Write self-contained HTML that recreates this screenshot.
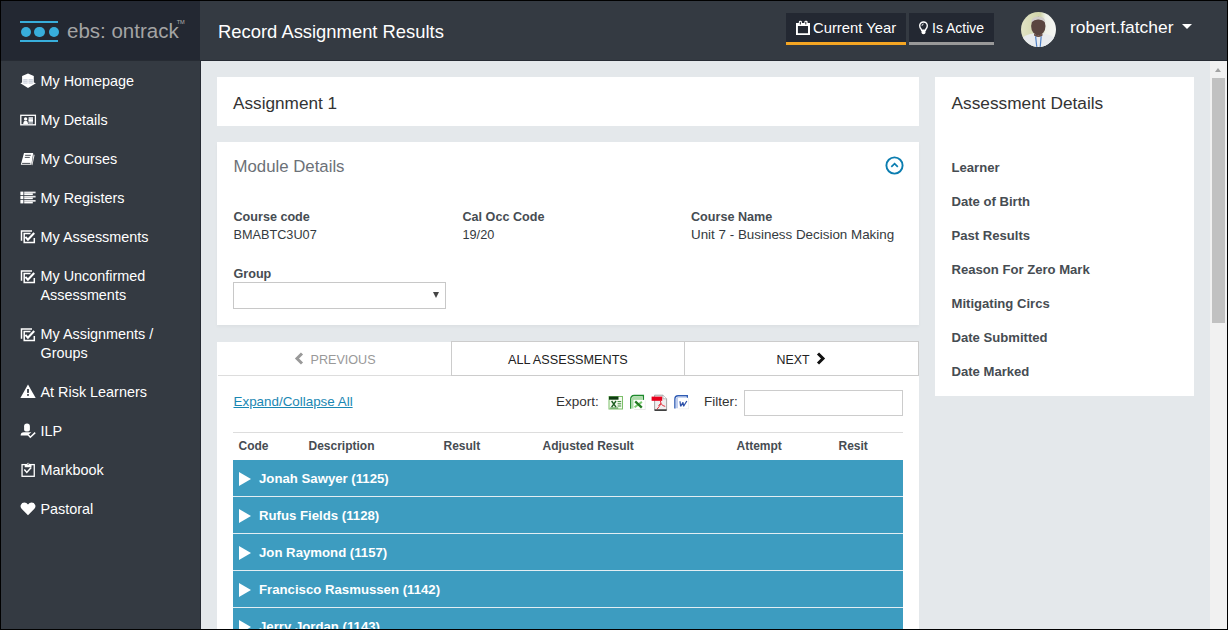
<!DOCTYPE html>
<html><head><meta charset="utf-8">
<style>
*{box-sizing:border-box;margin:0;padding:0}
html,body{width:1228px;height:630px;overflow:hidden;background:#000;font-family:"Liberation Sans",sans-serif}
#frame{position:absolute;left:0;top:0;width:1228px;height:630px;overflow:hidden;background:#000}
.a{position:absolute}
.t{position:absolute;white-space:nowrap}
svg{position:absolute;overflow:visible}
</style></head><body><div id="frame">
<div class="a" style="left:1px;top:1px;width:1226px;height:628px;background:#e4e8eb;"></div>
<div class="a" style="left:1px;top:1px;width:199px;height:59px;background:#232832;"></div>
<div class="a" style="left:200px;top:1px;width:1027px;height:59px;background:#343a42;"></div>
<div class="a" style="left:1px;top:60px;width:1226px;height:1px;background:#262b33;"></div>
<div class="a" style="left:1px;top:61px;width:199px;height:568px;background:#343a42;"></div>
<div class="a" style="left:200px;top:61px;width:1px;height:568px;background:#262b33;"></div>
<div class="a" style="left:20px;top:21px;width:38px;height:2px;background:#38aedb;"></div>
<div class="a" style="left:20px;top:40px;width:38px;height:2px;background:#38aedb;"></div>
<div class="a" style="left:20.5px;top:26.6px;width:10.4px;height:10.4px;border-radius:50%;background:#38aedb"></div>
<div class="a" style="left:34.4px;top:26.6px;width:10.4px;height:10.4px;border-radius:50%;background:#38aedb"></div>
<div class="a" style="left:48.599999999999994px;top:26.6px;width:10.4px;height:10.4px;border-radius:50%;background:#38aedb"></div>
<div class="a" style="left:786px;top:13px;width:120px;height:29px;background:#232832;"></div>
<div class="a" style="left:786px;top:42px;width:120px;height:3px;background:#f5a623;"></div>
<div class="a" style="left:909px;top:13px;width:85px;height:29px;background:#232832;"></div>
<div class="a" style="left:909px;top:42px;width:85px;height:3px;background:#999999;"></div>
<svg style="left:1021px;top:12px" width="35" height="35" viewBox="0 0 35 35"><defs><clipPath id="av"><circle cx="17.5" cy="17.5" r="17.5"/></clipPath><linearGradient id="avbg" x1="0" x2="1" y1="0" y2="0"><stop offset="0" stop-color="#e2e4c6"/><stop offset="0.55" stop-color="#cfd3a8"/><stop offset="0.7" stop-color="#eef0e8"/><stop offset="1" stop-color="#f6f7f4"/></linearGradient></defs><g clip-path="url(#av)"><rect width="35" height="35" fill="url(#avbg)"/><path d="M-2 36 L0 27 Q4 22.5 12 21.5 L23 21.5 Q31 23 36 28 L37 36Z" fill="#e8ebee"/><ellipse cx="17.3" cy="14" rx="7.2" ry="9.2" fill="#5a4540"/><path d="M10.2 10.4 Q10.4 4.6 17.3 4.4 Q24.2 4.6 24.4 10.4 Q21 7.4 17.3 7.6 Q13.6 7.4 10.2 10.4Z" fill="#cfcbc9"/><path d="M13.2 21.5 Q17.3 24.8 21.4 21.5 L21.6 23.4 Q17.3 26.4 13 23.4Z" fill="#6a4f47"/><path d="M14.6 24.4 L15.8 35 M20.2 24.2 L19.2 35" stroke="#4f80c6" stroke-width="1.2"/></g></svg>
<div class="a" style="left:1182px;top:24px;width:0;height:0;border-left:5px solid transparent;border-right:5px solid transparent;border-top:5px solid #fff"></div>
<div class="a" style="left:217px;top:77px;width:702px;height:49px;background:#fff;"></div>
<div class="a" style="left:217px;top:142px;width:702px;height:183px;background:#fff;box-shadow:0 2px 3px rgba(0,0,0,0.035)"></div>
<div class="a" style="left:233px;top:282px;width:213px;height:27px;background:#fff;border:1px solid #c8c8c8"></div>
<div class="a" style="left:433px;top:292px;width:0;height:0;border-left:3px solid transparent;border-right:3px solid transparent;border-top:6px solid #444"></div>
<svg style="left:884.7px;top:156.3px" width="19" height="19" viewBox="0 0 19 19"><circle cx="9.5" cy="9.5" r="8.1" fill="none" stroke="#0b7db0" stroke-width="1.9"/><path d="M6.3 10.9 L9.6 7.6 L12.8 10.9" fill="none" stroke="#0b7db0" stroke-width="1.7"/></svg>
<div class="a" style="left:217px;top:342px;width:702px;height:290px;background:#fff;"></div>
<div class="a" style="left:218px;top:375px;width:233px;height:1px;background:#dddddd;"></div>
<div class="a" style="left:451px;top:341px;width:234px;height:35px;background:#fff;border:1px solid #cccccc"></div>
<div class="a" style="left:684px;top:341px;width:235px;height:35px;background:#fff;border:1px solid #cccccc"></div>
<svg style="left:294px;top:352px" width="11" height="13" viewBox="0 0 11 13"><path d="M8 1.5 L3 6.5 L8 11.5" fill="none" stroke="#999" stroke-width="3"/></svg>
<svg style="left:815px;top:352px" width="11" height="13" viewBox="0 0 11 13"><path d="M3 1.5 L8 6.5 L3 11.5" fill="none" stroke="#111" stroke-width="3"/></svg>
<div class="a" style="left:744px;top:390px;width:159px;height:26px;background:#fff;border:1px solid #cccccc"></div>
<div class="a" style="left:233px;top:432px;width:670px;height:1px;background:#dddddd;"></div>
<div class="a" style="left:233px;top:460px;width:670px;height:36px;background:#3d9cc0;"></div>
<div class="a" style="left:233px;top:496px;width:670px;height:1px;background:#e3eef3;"></div>
<div class="a" style="left:238.5px;top:471.6px;width:0;height:0;border-top:7px solid transparent;border-bottom:7px solid transparent;border-left:12.2px solid #fff"></div>
<div class="a" style="left:233px;top:497px;width:670px;height:36px;background:#3d9cc0;"></div>
<div class="a" style="left:233px;top:533px;width:670px;height:1px;background:#e3eef3;"></div>
<div class="a" style="left:238.5px;top:508.6px;width:0;height:0;border-top:7px solid transparent;border-bottom:7px solid transparent;border-left:12.2px solid #fff"></div>
<div class="a" style="left:233px;top:534px;width:670px;height:36px;background:#3d9cc0;"></div>
<div class="a" style="left:233px;top:570px;width:670px;height:1px;background:#e3eef3;"></div>
<div class="a" style="left:238.5px;top:545.6px;width:0;height:0;border-top:7px solid transparent;border-bottom:7px solid transparent;border-left:12.2px solid #fff"></div>
<div class="a" style="left:233px;top:571px;width:670px;height:36px;background:#3d9cc0;"></div>
<div class="a" style="left:233px;top:607px;width:670px;height:1px;background:#e3eef3;"></div>
<div class="a" style="left:238.5px;top:582.6px;width:0;height:0;border-top:7px solid transparent;border-bottom:7px solid transparent;border-left:12.2px solid #fff"></div>
<div class="a" style="left:233px;top:608px;width:670px;height:36px;background:#3d9cc0;"></div>
<div class="a" style="left:233px;top:644px;width:670px;height:1px;background:#e3eef3;"></div>
<div class="a" style="left:238.5px;top:619.6px;width:0;height:0;border-top:7px solid transparent;border-bottom:7px solid transparent;border-left:12.2px solid #fff"></div>
<div class="a" style="left:935px;top:77px;width:259px;height:319px;background:#fff;"></div>
<div class="a" style="left:1210px;top:61px;width:17px;height:568px;background:#f1f1f1;"></div>
<div class="a" style="left:1212px;top:78px;width:13px;height:245px;background:#c1c1c1;"></div>
<div class="a" style="left:1215px;top:68px;width:0;height:0;border-left:3.5px solid transparent;border-right:3.5px solid transparent;border-bottom:4px solid #a3a3a3"></div>
<svg style="left:20px;top:73px" width="16" height="16" viewBox="0 0 16 16"><path d="M8 0.6 L13.8 3.1 L13.8 9.6 L15.9 10.3 L8 14.9 L0.4 10.3 L2.1 9.6 L2.1 3.1 Z" fill="#fff"/><rect x="3.3" y="6" width="4.2" height="4.6" fill="#c3cad6"/><rect x="8.6" y="6" width="4.2" height="4.6" fill="#c3cad6"/><path d="M3.3 7.2h4.2M3.3 9.2h4.2M8.6 7.2h4.2M8.6 9.2h4.2" stroke="#fff" stroke-width="0.7"/></svg>
<svg style="left:20px;top:114px" width="16" height="12" viewBox="0 0 16 12"><rect x="0.8" y="1.3" width="14.6" height="9.5" fill="none" stroke="#fff" stroke-width="1.3"/><circle cx="5.6" cy="4.9" r="1.7" fill="#fff"/><path d="M3.2 10.1 Q3.4 6.8 5.6 6.8 Q7.8 6.8 8 10.1Z" fill="#fff"/><rect x="8.6" y="3.1" width="4.4" height="6.7" fill="#d5d9de"/><rect x="8.6" y="5.6" width="4.4" height="1.4" fill="#fff"/><rect x="8.6" y="8.2" width="4.4" height="1.6" fill="#8d939a"/></svg>
<svg style="left:20px;top:152px" width="15" height="14" viewBox="0 0 15 14"><path d="M4 0.9 L13.2 0.9 L11.4 12.8 L0.8 12.8 Z" fill="#fff"/><path d="M13.6 2.2 L14.6 3 L12.4 13.2 L11.6 12.9Z" fill="#e6e6e6"/><path d="M5.1 3.3 H10.8 M4.8 5.4 H9.8 M2.1 11.4 H10.3" stroke="#343a42" stroke-width="0.9"/></svg>
<svg style="left:20px;top:191px" width="16" height="13" viewBox="0 0 16 13"><rect x="0.4" y="0.6" width="3" height="3.4" fill="#fff"/><rect x="4.2" y="0.6" width="11.4" height="1.7" fill="#e8e8ea"/><rect x="4.2" y="2.3" width="8.6" height="1.7" fill="#fff"/><rect x="0.4" y="4.8" width="3" height="3.4" fill="#fff"/><rect x="4.2" y="4.8" width="11.4" height="1.7" fill="#e8e8ea"/><rect x="4.2" y="6.5" width="8.6" height="1.7" fill="#fff"/><rect x="0.4" y="9.0" width="3" height="3.4" fill="#fff"/><rect x="4.2" y="9.0" width="11.4" height="1.7" fill="#e8e8ea"/><rect x="4.2" y="10.7" width="8.6" height="1.7" fill="#fff"/></svg>
<svg style="left:20px;top:229px" width="16" height="15" viewBox="0 0 16 15"><path d="M1.5 11.7 V1.9 H12" fill="none" stroke="#fff" stroke-width="1.5"/><path d="M14.3 9 V13.4 H4.2 V4.5 H10.5" fill="none" stroke="#fff" stroke-width="1.5"/><path d="M5.4 7.9 L7.9 10.7 L14.2 4" fill="none" stroke="#fff" stroke-width="2.1"/></svg>
<svg style="left:20px;top:269px" width="16" height="15" viewBox="0 0 16 15"><path d="M1.5 11.7 V1.9 H12" fill="none" stroke="#fff" stroke-width="1.5"/><path d="M14.3 9 V13.4 H4.2 V4.5 H10.5" fill="none" stroke="#fff" stroke-width="1.5"/><path d="M5.4 7.9 L7.9 10.7 L14.2 4" fill="none" stroke="#fff" stroke-width="2.1"/></svg>
<svg style="left:20px;top:327px" width="16" height="15" viewBox="0 0 16 15"><path d="M1.5 11.7 V1.9 H12" fill="none" stroke="#fff" stroke-width="1.5"/><path d="M14.3 9 V13.4 H4.2 V4.5 H10.5" fill="none" stroke="#fff" stroke-width="1.5"/><path d="M5.4 7.9 L7.9 10.7 L14.2 4" fill="none" stroke="#fff" stroke-width="2.1"/></svg>
<svg style="left:20px;top:384px" width="16" height="15" viewBox="0 0 16 15"><path d="M8 0.6 L15.7 14 L0.4 14 Z" fill="#fff"/><rect x="7.1" y="5" width="1.8" height="3.9" fill="#343a42"/><rect x="7.1" y="10.1" width="1.8" height="1.7" fill="#343a42"/></svg>
<svg style="left:20px;top:423px" width="16" height="16" viewBox="0 0 16 16"><path d="M4.1 3.4 Q4.1 0.6 7 0.6 Q9.9 0.6 9.9 3.4 V6.4 Q9.9 8.4 7 8.4 Q4.1 8.4 4.1 6.4 Z" fill="#fff"/><path d="M0.6 12.6 Q0.6 9.2 4 9.2 H11.4 L9 11.2 L8.2 12.6Z" fill="#fff"/><path d="M8.2 11.8 L10.3 14.2 L15.2 9.6" fill="none" stroke="#fff" stroke-width="1.5"/></svg>
<svg style="left:21px;top:462px" width="14" height="15" viewBox="0 0 14 15"><rect x="1.05" y="2.6" width="12.2" height="11.7" fill="none" stroke="#fff" stroke-width="1.3"/><path d="M3.7 5.2 V3 H5.6 Q5.8 0.7 7.1 0.7 Q8.4 0.7 8.6 3 H10.5 V5.2Z" fill="#fff"/><circle cx="7.1" cy="2.1" r="0.75" fill="#343a42"/><path d="M3.3 7.6 L5.8 10.4 L10.2 5.6" fill="none" stroke="#fff" stroke-width="1.5"/></svg>
<svg style="left:20px;top:502px" width="16" height="14" viewBox="0 0 16 14"><path d="M8 13.2 L1.6 6.8 Q0 5 0.8 3 Q1.8 0.6 4.4 0.6 Q6.6 0.6 8 2.6 Q9.4 0.6 11.6 0.6 Q14.2 0.6 15.2 3 Q16 5 14.4 6.8 Z" fill="#fff"/></svg>
<svg style="left:796px;top:20px" width="14" height="16" viewBox="0 0 14 16"><path d="M0 3.1 H14 V15 H0Z M1.9 5.9 V13.3 H12 V5.9Z" fill="#fff" fill-rule="evenodd"/><rect x="2.8" y="0.85" width="3.1" height="3.6" rx="1.2" fill="#fff"/><rect x="8.4" y="0.85" width="3.2" height="3.6" rx="1.2" fill="#fff"/><rect x="3.85" y="1.9" width="1" height="2.6" fill="#232832"/><rect x="9.3" y="1.9" width="1" height="2.6" fill="#232832"/></svg>
<svg style="left:919px;top:21px" width="10" height="14" viewBox="0 0 10 14"><path d="M4.5 1 A3.8 3.8 0 0 1 8.3 4.8 Q8.3 6.6 6.8 8.2 L6.4 9.2 H2.6 L2.2 8.2 Q0.7 6.6 0.7 4.8 A3.8 3.8 0 0 1 4.5 1 Z" fill="none" stroke="#fff" stroke-width="1.4"/><path d="M2.5 9.4 H6.5 V11.4 Q6.5 13.2 4.5 13.2 Q2.5 13.2 2.5 11.4Z" fill="#fff"/><path d="M3 4.8 Q3 3 4.6 3" fill="none" stroke="#fff" stroke-width="0.9"/></svg>
<svg style="left:608px;top:396px" width="16" height="14" viewBox="0 0 16 14"><rect x="1" y="0.5" width="13.5" height="12.5" fill="#f4fbef" stroke="#7cbf6a" stroke-width="1"/><rect x="1" y="0.5" width="9.5" height="3.2" fill="#0f3d12"/><path d="M3.6 5 L8 11.2 M8 5 L3.6 11.2" stroke="#1e5e22" stroke-width="1.4"/><path d="M9.6 5.6h3.6M9.6 7.8h3.6M9.6 10h3.6M2.2 12h8" stroke="#3d8a3a" stroke-width="1"/></svg>
<svg style="left:629px;top:394px" width="18" height="17" viewBox="0 0 18 17"><path d="M1.7 14.8 V5.2 Q1.7 1.5 5.2 1.5 H14.4 V5.9" fill="none" stroke="#1e8a2c" stroke-width="1.3"/><path d="M2.6 14.6 V5.6 Q2.6 2.6 5.6 2.6 H13.6 V5.9 H4.7 V14.6Z" fill="#9fd69a" opacity="0.85"/><rect x="5.2" y="6.4" width="11.2" height="9.6" fill="#aaa" opacity="0.35"/><rect x="4.7" y="5.9" width="11.2" height="9.4" fill="#fff"/><path d="M12.9 7.9 L5.6 13.2" stroke="#7ccb74" stroke-width="2"/><path d="M6.2 7.4 L12.8 13.6" stroke="#237a22" stroke-width="2.3"/></svg>
<svg style="left:651px;top:394px" width="17" height="17" viewBox="0 0 17 17"><path d="M3.6 1.2 H12 L15.6 4.8 V16.2 H3.6Z" fill="#efefef" stroke="#9a9a9a" stroke-width="0.9"/><rect x="3.6" y="15.4" width="12" height="1.4" fill="#222"/><path d="M12 1.2 V4.8 H15.6" fill="#fff" stroke="#aaa" stroke-width="0.8"/><rect x="0.6" y="2.6" width="10.6" height="4.2" fill="#e8001c"/><path d="M9.4 7 L10 9.4 Q11 12 14.2 12.4 M10 9.4 Q8.6 12.6 6 15.2 M10 9.4 L7.4 11.6" fill="none" stroke="#e2343f" stroke-width="1"/></svg>
<svg style="left:673px;top:394px" width="18" height="17" viewBox="0 0 18 17"><path d="M1.9 14.4 V5.2 Q1.9 1.8 5.2 1.8 H14.3 V5" fill="none" stroke="#2f5cb4" stroke-width="1.4"/><path d="M2.8 14.2 V5.6 Q2.8 2.8 5.6 2.8 H13.5 V4.4 H5.1 V14.2Z" fill="#b8c9ec" opacity="0.9"/><rect x="5.6" y="4.2" width="10.2" height="11" fill="#aaa" opacity="0.3"/><rect x="5.1" y="3.8" width="10.2" height="10.8" fill="#fff"/><path d="M7 7.2 L7.6 12.3 L10 8.4 L10.6 12.3 L13.8 7" fill="none" stroke="#2c50a8" stroke-width="1.25" stroke-linejoin="bevel"/></svg>
<div class="t" style="left:67px;top:21px;font-size:20.5px;line-height:20.5px;font-weight:400;color:#a4a4a4;letter-spacing:0px">ebs: ontrack</div>
<div class="t" style="left:176.8px;top:20px;font-size:5.6px;line-height:5.6px;font-weight:400;color:#b0b0b0;letter-spacing:-0.1px">TM</div>
<div class="t" style="left:218px;top:23px;font-size:18.4px;line-height:18.4px;font-weight:400;color:#fff;">Record Assignment Results</div>
<div class="t" style="left:813px;top:21px;font-size:14.8px;line-height:14.8px;font-weight:400;color:#fff;">Current Year</div>
<div class="t" style="left:932px;top:21px;font-size:14px;line-height:14px;font-weight:400;color:#fff;">Is Active</div>
<div class="t" style="left:1070px;top:19px;font-size:17.4px;line-height:17.4px;font-weight:400;color:#fff;">robert.fatcher</div>
<div class="t" style="left:40.5px;top:74px;font-size:14.4px;line-height:14.4px;font-weight:400;color:#fff;">My Homepage</div>
<div class="t" style="left:40.5px;top:113px;font-size:14.4px;line-height:14.4px;font-weight:400;color:#fff;">My Details</div>
<div class="t" style="left:40.5px;top:152px;font-size:14.4px;line-height:14.4px;font-weight:400;color:#fff;">My Courses</div>
<div class="t" style="left:40.5px;top:191px;font-size:14.4px;line-height:14.4px;font-weight:400;color:#fff;">My Registers</div>
<div class="t" style="left:40.5px;top:230px;font-size:14.4px;line-height:14.4px;font-weight:400;color:#fff;">My Assessments</div>
<div class="t" style="left:40.5px;top:269px;font-size:14.4px;line-height:14.4px;font-weight:400;color:#fff;">My Unconfirmed</div>
<div class="t" style="left:40.5px;top:288px;font-size:14.4px;line-height:14.4px;font-weight:400;color:#fff;">Assessments</div>
<div class="t" style="left:40.5px;top:327px;font-size:14.4px;line-height:14.4px;font-weight:400;color:#fff;">My Assignments /</div>
<div class="t" style="left:40.5px;top:346px;font-size:14.4px;line-height:14.4px;font-weight:400;color:#fff;">Groups</div>
<div class="t" style="left:40.5px;top:385px;font-size:14.4px;line-height:14.4px;font-weight:400;color:#fff;">At Risk Learners</div>
<div class="t" style="left:40.5px;top:424px;font-size:14.4px;line-height:14.4px;font-weight:400;color:#fff;">ILP</div>
<div class="t" style="left:40.5px;top:463px;font-size:14.4px;line-height:14.4px;font-weight:400;color:#fff;">Markbook</div>
<div class="t" style="left:40.5px;top:502px;font-size:14.4px;line-height:14.4px;font-weight:400;color:#fff;">Pastoral</div>
<div class="t" style="left:233px;top:95px;font-size:17.2px;line-height:17.2px;font-weight:400;color:#333;">Assignment 1</div>
<div class="t" style="left:233.5px;top:159px;font-size:16.8px;line-height:16.8px;font-weight:400;color:#6c7177;">Module Details</div>
<div class="t" style="left:233.5px;top:211px;font-size:12.6px;line-height:12.6px;font-weight:700;color:#464c52;">Course code</div>
<div class="t" style="left:233.5px;top:228.5px;font-size:12.7px;line-height:12.7px;font-weight:400;color:#343a40;">BMABTC3U07</div>
<div class="t" style="left:462.5px;top:211px;font-size:12.6px;line-height:12.6px;font-weight:700;color:#464c52;">Cal Occ Code</div>
<div class="t" style="left:462.5px;top:228.5px;font-size:12.7px;line-height:12.7px;font-weight:400;color:#343a40;">19/20</div>
<div class="t" style="left:691px;top:211px;font-size:12.6px;line-height:12.6px;font-weight:700;color:#464c52;">Course Name</div>
<div class="t" style="left:691px;top:227.5px;font-size:13.4px;line-height:13.4px;font-weight:400;color:#343a40;">Unit 7 - Business Decision Making</div>
<div class="t" style="left:233.5px;top:267.6px;font-size:12.6px;line-height:12.6px;font-weight:700;color:#464c52;">Group</div>
<div class="t" style="left:310.5px;top:354px;font-size:12.6px;line-height:12.6px;font-weight:400;color:#999;">PREVIOUS</div>
<div class="t" style="left:508px;top:354px;font-size:12.67px;line-height:12.67px;font-weight:400;color:#222;">ALL ASSESSMENTS</div>
<div class="t" style="left:776.5px;top:354px;font-size:12.4px;line-height:12.4px;font-weight:400;color:#222;">NEXT</div>
<div class="t" style="left:233.5px;top:395px;font-size:13.4px;line-height:13.4px;font-weight:400;color:#1a87b3;text-decoration:underline">Expand/Collapse All</div>
<div class="t" style="left:556px;top:395px;font-size:13.5px;line-height:13.5px;font-weight:400;color:#333;">Export:</div>
<div class="t" style="left:704px;top:395px;font-size:13.5px;line-height:13.5px;font-weight:400;color:#333;">Filter:</div>
<div class="t" style="left:238.5px;top:440px;font-size:12.0px;line-height:12.0px;font-weight:700;color:#464c52;">Code</div>
<div class="t" style="left:308.5px;top:440px;font-size:12.0px;line-height:12.0px;font-weight:700;color:#464c52;">Description</div>
<div class="t" style="left:443.5px;top:440px;font-size:12.0px;line-height:12.0px;font-weight:700;color:#464c52;">Result</div>
<div class="t" style="left:542.5px;top:440px;font-size:12.0px;line-height:12.0px;font-weight:700;color:#464c52;">Adjusted Result</div>
<div class="t" style="left:736.5px;top:440px;font-size:12.0px;line-height:12.0px;font-weight:700;color:#464c52;">Attempt</div>
<div class="t" style="left:838.5px;top:440px;font-size:12.0px;line-height:12.0px;font-weight:700;color:#464c52;">Resit</div>
<div class="t" style="left:259px;top:472px;font-size:13.2px;line-height:13.2px;font-weight:700;color:#fff;">Jonah Sawyer (1125)</div>
<div class="t" style="left:259px;top:509px;font-size:13.2px;line-height:13.2px;font-weight:700;color:#fff;">Rufus Fields (1128)</div>
<div class="t" style="left:259px;top:546px;font-size:13.2px;line-height:13.2px;font-weight:700;color:#fff;">Jon Raymond (1157)</div>
<div class="t" style="left:259px;top:583px;font-size:13.2px;line-height:13.2px;font-weight:700;color:#fff;">Francisco Rasmussen (1142)</div>
<div class="t" style="left:259px;top:620px;font-size:13.2px;line-height:13.2px;font-weight:700;color:#fff;">Jerry Jordan (1143)</div>
<div class="t" style="left:951.5px;top:95px;font-size:17.3px;line-height:17.3px;font-weight:400;color:#333;">Assessment Details</div>
<div class="t" style="left:951.5px;top:161px;font-size:13.1px;line-height:13.1px;font-weight:700;color:#464c52;">Learner</div>
<div class="t" style="left:951.5px;top:195px;font-size:13.1px;line-height:13.1px;font-weight:700;color:#464c52;">Date of Birth</div>
<div class="t" style="left:951.5px;top:229px;font-size:13.1px;line-height:13.1px;font-weight:700;color:#464c52;">Past Results</div>
<div class="t" style="left:951.5px;top:263px;font-size:13.1px;line-height:13.1px;font-weight:700;color:#464c52;">Reason For Zero Mark</div>
<div class="t" style="left:951.5px;top:297px;font-size:13.1px;line-height:13.1px;font-weight:700;color:#464c52;">Mitigating Circs</div>
<div class="t" style="left:951.5px;top:331px;font-size:13.1px;line-height:13.1px;font-weight:700;color:#464c52;">Date Submitted</div>
<div class="t" style="left:951.5px;top:365px;font-size:13.1px;line-height:13.1px;font-weight:700;color:#464c52;">Date Marked</div>
<div class="a" style="left:0px;top:0px;width:1228px;height:1px;background:#000"></div>
<div class="a" style="left:0px;top:629px;width:1228px;height:1px;background:#000"></div>
<div class="a" style="left:0px;top:0px;width:1px;height:630px;background:#000"></div>
<div class="a" style="left:1227px;top:0px;width:1px;height:630px;background:#000"></div>
</div></body></html>
